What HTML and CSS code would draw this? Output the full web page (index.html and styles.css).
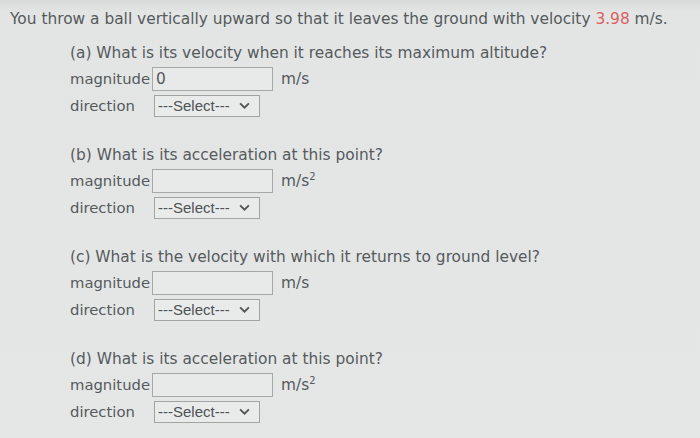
FILE: index.html
```html
<!DOCTYPE html>
<html>
<head>
<meta charset="utf-8">
<link rel="stylesheet" href="styles.css">
</head>
<body>
<div class="page">
  <p class="intro">You throw a ball vertically upward so that it leaves the ground with velocity <span class="val">3.98</span> m/s.</p>
  <div class="parts">
    <div class="part">
      <p class="q">(a) What is its velocity when it reaches its maximum altitude?</p>
      <div class="row"><span class="lbl">magnitude</span><span class="box">0</span><span class="unit">m/s</span></div>
      <div class="row"><span class="lbl">direction</span><span class="sel">---Select---<svg class="chev" viewBox="0 0 10 6" width="11" height="7"><path d="M1 1 L5 5 L9 1" fill="none" stroke="#555" stroke-width="1.7"/></svg></span></div>
    </div>
    <div class="part">
      <p class="q">(b) What is its acceleration at this point?</p>
      <div class="row"><span class="lbl">magnitude</span><span class="box"></span><span class="unit">m/s<sup>2</sup></span></div>
      <div class="row"><span class="lbl">direction</span><span class="sel">---Select---<svg class="chev" viewBox="0 0 10 6" width="11" height="7"><path d="M1 1 L5 5 L9 1" fill="none" stroke="#555" stroke-width="1.7"/></svg></span></div>
    </div>
    <div class="part">
      <p class="q">(c) What is the velocity with which it returns to ground level?</p>
      <div class="row"><span class="lbl">magnitude</span><span class="box"></span><span class="unit">m/s</span></div>
      <div class="row"><span class="lbl">direction</span><span class="sel">---Select---<svg class="chev" viewBox="0 0 10 6" width="11" height="7"><path d="M1 1 L5 5 L9 1" fill="none" stroke="#555" stroke-width="1.7"/></svg></span></div>
    </div>
    <div class="part">
      <p class="q">(d) What is its acceleration at this point?</p>
      <div class="row"><span class="lbl">magnitude</span><span class="box"></span><span class="unit">m/s<sup>2</sup></span></div>
      <div class="row"><span class="lbl">direction</span><span class="sel">---Select---<svg class="chev" viewBox="0 0 10 6" width="11" height="7"><path d="M1 1 L5 5 L9 1" fill="none" stroke="#555" stroke-width="1.7"/></svg></span></div>
    </div>
  </div>
</div>
</body>
</html>
```
FILE: styles.css
```css
html, body {
  margin: 0;
  padding: 0;
}
body {
  width: 700px;
  height: 438px;
  overflow: hidden;
  background: linear-gradient(#d9dbdb 0, #e3e5e5 12px, #e5e7e7 100%);
  font-family: "DejaVu Sans", Verdana, sans-serif;
  font-size: 15.4px;
  color: #555a5c;
}
.page {
  padding: 10px 0 0 10px;
}
.intro {
  margin: 0;
  line-height: 18px;
}
.val {
  color: #d9605e;
}
.parts {
  padding-left: 60px;
  padding-top: 16px;
  display: flex;
  flex-direction: column;
  gap: 27px;
}
.part {
  display: flex;
  flex-direction: column;
}
.q {
  margin: 0;
  line-height: 18px;
}
.row {
  display: flex;
  align-items: center;
  height: 27px;
}
.row:nth-child(2) {
  margin-top: 3px;
}
.lbl {
  width: 82px;
  flex: none;
  font-size: 14.8px;
  white-space: nowrap;
}
.box {
  width: 116px;
  height: 22px;
  border: 1px solid #a6a8a8;
  background: #e8eaea;
  line-height: 22px;
  padding-left: 3px;
  box-sizing: content-box;
  margin-right: 8px;
}
.unit sup {
  font-size: 10px;
  line-height: 0;
  vertical-align: 6px;
}
.sel {
  margin-left: 2px;
  width: 106px;
  height: 22px;
  border: 1px solid #a2a4a4;
  background: #e9ebeb;
  font-family: "Liberation Sans", Arial, sans-serif;
  font-size: 15px;
  color: #4e5254;
  display: flex;
  align-items: center;
  justify-content: space-between;
  padding: 0 9px 0 3px;
  box-sizing: border-box;
}
.chev {
  flex: none;
}
```
